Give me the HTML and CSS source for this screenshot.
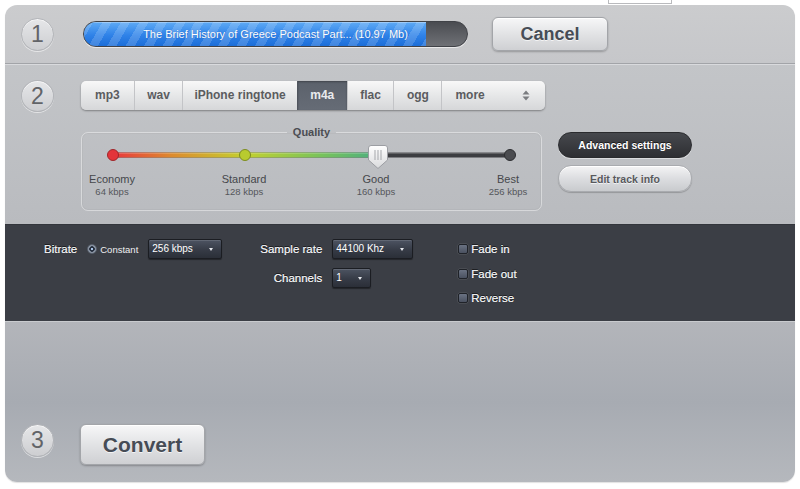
FILE: index.html
```html
<!DOCTYPE html>
<html>
<head>
<meta charset="utf-8">
<title>Audio Converter</title>
<link rel="stylesheet" href="styles.css">
</head>
<body>
<div class="remove-ads">Remove Ads</div>
<main class="panel">
  <section class="step step1">
    <div class="num">1</div>
    <div class="progress">
      <div class="progress-fill" style="width:89.4%"></div>
      <span class="progress-text">The Brief History of Greece Podcast Part... (10.97 Mb)</span>
    </div>
    <button class="btn cancel">Cancel</button>
  </section>

  <section class="step step2">
    <div class="num">2</div>
    <div class="step2-body">
      <nav class="formats">
        <span class="tab">mp3</span>
        <span class="tab">wav</span>
        <span class="tab wide">iPhone ringtone</span>
        <span class="tab on">m4a</span>
        <span class="tab">flac</span>
        <span class="tab">ogg</span>
        <span class="tab more">more
          <svg class="updown" width="8" height="11" viewBox="0 0 8 11"><path d="M4 0.5 L7.5 4.5 H0.5Z M4 10.5 L7.5 6.5 H0.5Z" fill="#7a7c80"/></svg>
        </span>
      </nav>
      <div class="quality-row">
        <fieldset class="quality">
          <legend>Quality</legend>
          <svg class="track" width="459" height="30" viewBox="0 0 459 30">
            <defs>
              <linearGradient id="qg" x1="31" y1="0" x2="296" y2="0" gradientUnits="userSpaceOnUse">
                <stop offset="0" stop-color="#e8373c"/>
                <stop offset="0.22" stop-color="#dd8a2e"/>
                <stop offset="0.5" stop-color="#c3d030"/>
                <stop offset="0.78" stop-color="#79c35a"/>
                <stop offset="1" stop-color="#4cae80"/>
              </linearGradient>
              <linearGradient id="tg" x1="0" y1="0" x2="0" y2="1">
                <stop offset="0" stop-color="#ffffff"/>
                <stop offset="1" stop-color="#d9dadc"/>
              </linearGradient>
            </defs>
            <rect x="31" y="12.5" width="397" height="5" rx="2.5" fill="#3c3d41"/>
            <rect x="31" y="12.5" width="265" height="5" fill="url(#qg)"/>
            <rect x="31" y="12.5" width="397" height="1.5" fill="#ffffff" opacity="0.18"/>
            <circle cx="31" cy="15" r="5.5" fill="#e3343a" stroke="#a0262a" stroke-width="1"/>
            <circle cx="163" cy="15" r="5.5" fill="#b8cb2f" stroke="#7d8c20" stroke-width="1"/>
            <circle cx="428" cy="15" r="5.5" fill="#4b4c50" stroke="#2d2e31" stroke-width="1"/>
            <path d="M289 5.5 H303 A2.5 2.5 0 0 1 305.5 8 V20 L296 28.5 L286.5 20 V8 A2.5 2.5 0 0 1 289 5.5Z" fill="url(#tg)" stroke="#9c9ea3" stroke-width="1"/>
            <path d="M293 10 V20 M296 10 V20 M299 10 V20" stroke="#a5a7ab" stroke-width="1"/>
          </svg>
          <div class="marks">
            <div class="mark"><span class="mname">Economy</span><span class="mrate">64 kbps</span></div>
            <div class="mark"><span class="mname">Standard</span><span class="mrate">128 kbps</span></div>
            <div class="mark"><span class="mname">Good</span><span class="mrate">160 kbps</span></div>
            <div class="mark"><span class="mname">Best</span><span class="mrate">256 kbps</span></div>
          </div>
        </fieldset>
        <div class="side-buttons">
          <button class="pill dark">Advanced settings</button>
          <button class="pill light">Edit track info</button>
        </div>
      </div>
    </div>
  </section>

  <section class="advanced">
    <div class="grp bitrate">
      <span class="lbl">Bitrate</span>
      <span class="radio"></span>
      <span class="small">Constant</span>
      <div class="select w74">256 kbps<span class="caret"></span></div>
    </div>
    <div class="grp rates">
      <span class="lbl">Sample rate</span>
      <div class="select w81">44100 Khz<span class="caret"></span></div>
      <span class="lbl">Channels</span>
      <div class="select w39">1<span class="caret"></span></div>
    </div>
    <div class="grp checks">
      <label class="check"><span class="box"></span>Fade in</label>
      <label class="check"><span class="box"></span>Fade out</label>
      <label class="check"><span class="box"></span>Reverse</label>
    </div>
  </section>

  <section class="step step3">
    <div class="num">3</div>
    <button class="btn convert">Convert</button>
  </section>
</main>
</body>
</html>
```

FILE: styles.css
```css
* { box-sizing: border-box; }

html, body {
  margin: 0;
  padding: 0;
  background: #ffffff;
  font-family: "Liberation Sans", Arial, sans-serif;
}

body {
  position: relative;
  width: 800px;
  height: 489px;
  overflow: hidden;
}

.remove-ads {
  position: absolute;
  left: 608px;
  top: -9px;
  width: 64px;
  height: 13px;
  border: 1px solid #b9babd;
  border-top: 0;
  background: #fff;
  font-size: 10px;
  line-height: 12px;
  text-align: center;
  color: #333;
}

.panel {
  margin: 5px 5px 0 5px;
  width: 790px;
  height: 477px;
  border-radius: 12px;
  overflow: hidden;
  display: flex;
  flex-direction: column;
  box-shadow: 0 1px 1px rgba(0, 0, 0, 0.12);
}

.step {
  display: flex;
  padding-left: 16px;
}

.num {
  width: 33px;
  height: 33px;
  flex: none;
  border-radius: 50%;
  background: linear-gradient(#e6e7e9, #cdced1);
  border: 1px solid #b3b5b9;
  box-shadow: inset 0 1px 0 #f6f6f7, 0 1px 0 rgba(255, 255, 255, 0.55);
  color: #626468;
  font-size: 23px;
  line-height: 31px;
  text-align: center;
}

/* step 1 */
.step1 {
  height: 59px;
  align-items: center;
  background: linear-gradient(#cbccce, #c6c7ca);
  border-bottom: 1px solid #a2a4a8;
}

.progress {
  position: relative;
  margin-left: 29px;
  width: 385px;
  height: 26px;
  border-radius: 13px;
  overflow: hidden;
  border: 1px solid #404247;
  background: linear-gradient(#4a4c51, #6f7176);
  box-shadow: 0 1px 0 rgba(255, 255, 255, 0.6);
}

.progress-fill {
  height: 100%;
  background:
    repeating-linear-gradient(120deg, rgba(255, 255, 255, 0.16) 0 8px, rgba(255, 255, 255, 0) 8px 16px),
    linear-gradient(#5eaaf5, #2f82e8 55%, #1c6ed8);
  box-shadow: inset 0 1px 0 rgba(255, 255, 255, 0.3);
}

.progress-text {
  position: absolute;
  left: 0;
  right: 0;
  top: 0;
  line-height: 24px;
  text-align: center;
  font-size: 11px;
  color: #ffffff;
  text-shadow: 0 0 1px rgba(0, 40, 110, 0.4);
}

.btn {
  font-family: "Liberation Sans", Arial, sans-serif;
  font-weight: bold;
  color: #464c56;
  border: 1px solid #a3a5a9;
  border-radius: 6px;
  background: linear-gradient(#f7f7f8, #e2e3e5 50%, #cfd0d3);
  box-shadow: inset 0 1px 0 #ffffff, 0 1px 2px rgba(0, 0, 0, 0.25);
  padding: 0;
  text-shadow: 0 1px 0 rgba(255, 255, 255, 0.7);
}

.cancel {
  margin-left: 24px;
  width: 116px;
  height: 34px;
  font-size: 18px;
}

/* step 2 */
.step2 {
  height: 160px;
  padding-top: 17px;
  background: linear-gradient(#c3c5c8, #b9bbbf);
  box-shadow: inset 0 1px 0 #d9dadd;
}

.step2 .num {
  margin-top: -1px;
  height: 32px;
  width: 33px;
  line-height: 30px;
}

.step2-body {
  margin-left: 27px;
  display: flex;
  flex-direction: column;
}

.formats {
  display: flex;
  width: 464px;
  height: 29px;
  border-radius: 5px;
  overflow: hidden;
  background: linear-gradient(#f8f8f8, #e6e7e8 50%, #d6d7d9);
  box-shadow: 0 1px 2px rgba(0, 0, 0, 0.35);
}

.tab {
  padding: 0 12.5px;
  line-height: 29px;
  font-size: 12px;
  font-weight: bold;
  color: #5b5c5f;
  border-left: 1px solid #c3c4c7;
  white-space: nowrap;
}

.tab:first-child { border-left: 0; padding: 0 14px; }
.tab.wide { padding: 0 11px; }

.tab.on {
  background: linear-gradient(#5b616b, #666c76);
  color: #e9ebee;
  border-left-color: #50555e;
  box-shadow: inset 0 1px 2px rgba(0, 0, 0, 0.3);
}

.tab.more {
  flex: 1;
  display: flex;
  align-items: center;
  justify-content: space-between;
  padding: 0 15px 0 13px;
}

.quality-row {
  display: flex;
  align-items: flex-start;
  gap: 16px;
  margin-top: 16px;
}

.quality {
  margin: 0;
  padding: 0 0 12px 0;
  width: 461px;
  min-width: 0;
  border: 1px solid rgba(255, 255, 255, 0.42);
  border-radius: 7px;
  box-shadow: inset 0 0 0 1px rgba(0, 0, 0, 0.03);
}

.quality legend {
  margin: 0 auto;
  padding: 0 6px;
  font-size: 11px;
  line-height: 13px;
  font-weight: bold;
  color: #4b4d52;
}

.track {
  display: block;
  margin-top: 1px;
}

.marks {
  display: grid;
  grid-template-columns: repeat(4, 132px);
  width: 528px;
  margin-left: -36px;
  margin-top: 3px;
}

.mark {
  display: flex;
  flex-direction: column;
  align-items: center;
}

.mname {
  font-size: 11px;
  line-height: 13px;
  color: #45474b;
}

.mrate {
  font-size: 9.5px;
  line-height: 12px;
  color: #55575b;
}

.side-buttons {
  margin-top: 6px;
  display: flex;
  flex-direction: column;
  gap: 7px;
}

.pill {
  width: 134px;
  height: 26px;
  border-radius: 13px;
  padding: 0;
  font-family: "Liberation Sans", Arial, sans-serif;
  font-size: 10.5px;
  font-weight: bold;
}

.pill.dark {
  background: linear-gradient(#46484d, #2e2f33);
  color: #ffffff;
  border: 1px solid #2a2b2e;
  box-shadow: 0 1px 0 rgba(255, 255, 255, 0.45);
  text-shadow: 0 -1px 0 rgba(0, 0, 0, 0.6);
}

.pill.light {
  height: 27px;
  background: linear-gradient(#f4f4f5, #dcdde0 50%, #c9cbce);
  color: #58595d;
  border: 1px solid #a9abaf;
  box-shadow: inset 0 1px 0 #ffffff, 0 1px 1px rgba(0, 0, 0, 0.2);
  text-shadow: 0 1px 0 rgba(255, 255, 255, 0.7);
}

/* advanced settings */
.advanced {
  height: 98px;
  display: flex;
  align-items: flex-start;
  padding-top: 14px;
  background: #3b3e45;
  border-top: 1px solid #33363c;
  border-bottom: 1px solid #c9cbce;
  color: #eeeeee;
  font-size: 11px;
}

.grp { display: flex; align-items: center; }

.bitrate {
  margin-left: 39px;
  height: 20px;
}

.lbl {
  color: #eeeff1;
  font-size: 11.5px;
  text-shadow: 0 -1px 0 rgba(0, 0, 0, 0.6), 0 0 0.3px #eeeff1;
}

.radio {
  margin-left: 10px;
  width: 10px;
  height: 10px;
  border-radius: 50%;
  background: radial-gradient(circle, #aac4e8 0 1px, #27303f 1.5px 2.5px, #8d97a6 3px);
  border: 1px solid #59616d;
}

.small {
  margin-left: 3px;
  font-size: 9.5px;
  color: #eeeff1;
}

.select {
  position: relative;
  height: 20px;
  line-height: 18px;
  padding-left: 3px;
  font-size: 10px;
  color: #ffffff;
  border: 1px solid #1b1d22;
  border-radius: 2px;
  background: linear-gradient(#4d5462, #363b46 55%, #2b2f38);
  box-shadow: inset 0 1px 0 rgba(255, 255, 255, 0.12), 0 1px 1px rgba(0, 0, 0, 0.4);
}

.caret {
  position: absolute;
  right: 8px;
  top: 8px;
  border-left: 2.5px solid transparent;
  border-right: 2.5px solid transparent;
  border-top: 3px solid #e4e6ea;
}

.bitrate .select { margin-left: 10px; }

.w74 { width: 74px; }
.w81 { width: 81px; }
.w39 { width: 39px; }

.rates {
  margin-left: 38px;
  display: grid;
  grid-template-columns: auto auto;
  column-gap: 10px;
  row-gap: 9px;
  align-items: center;
  justify-items: end;
}

.rates .select { justify-self: start; }

.checks {
  margin-left: 45px;
  margin-top: -2px;
  flex-direction: column;
  align-items: flex-start;
}

.check {
  display: flex;
  align-items: center;
  height: 24.5px;
  font-size: 11.5px;
  color: #eeeff1;
  text-shadow: 0 -1px 0 rgba(0, 0, 0, 0.6), 0 0 0.3px #eeeff1;
}

.box {
  width: 10px;
  height: 10px;
  margin-right: 3px;
  border-radius: 2px;
  border: 1px solid #1f2228;
  background: linear-gradient(#6a7282, #4a5160);
  box-shadow: 0 0 0 0.5px rgba(255, 255, 255, 0.15);
}

/* step 3 */
.step3 {
  flex: 1;
  align-items: flex-end;
  padding-bottom: 17px;
  background: linear-gradient(#b3b5ba, #a7abb2 50%, #b5b8bd);
}

.step3 .num {
  margin-bottom: 8px;
}

.convert {
  margin-left: 26px;
  width: 125px;
  height: 41px;
  font-size: 21px;
}
```
